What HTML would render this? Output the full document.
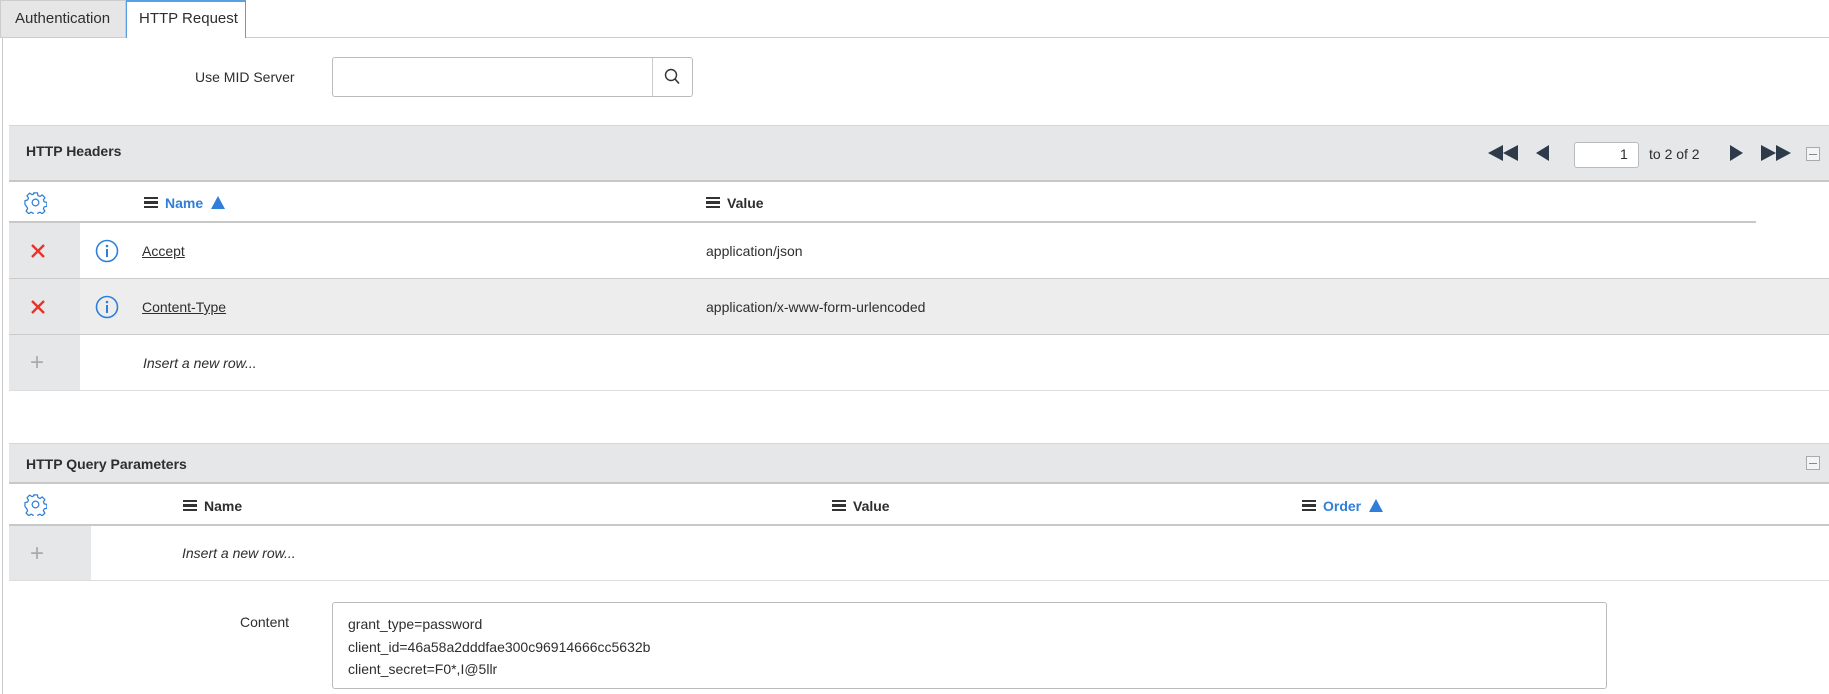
<!DOCTYPE html>
<html><head><meta charset="utf-8"><style>
*{box-sizing:border-box;margin:0;padding:0}
body{width:1829px;height:694px;background:#fff;font-family:"Liberation Sans",sans-serif;font-size:14px;color:#2e2e2e;position:relative;overflow:hidden}
.a{position:absolute}
.t{position:absolute;white-space:nowrap;line-height:18px}
.hb{position:absolute;width:14px;height:11px;border-top:2.5px solid #333;border-bottom:2.5px solid #333}
.hb:after{content:"";position:absolute;left:0;right:0;top:2px;height:2.5px;background:#333}
.blue{color:#2f7fd8}
</style></head><body>
<div class="a" style="left:0;top:0;width:126px;height:37px;background:#e6e6e6;border:1px solid #ccc;border-bottom:none"></div>
<div class="t" style="left:15px;top:10px;font-size:15px">Authentication</div>
<div class="a" style="left:126px;top:0;width:120px;height:38px;background:#fff;border:1px solid #5b9fe2;border-bottom:none;border-top:2px solid #5b9fe2"></div>
<div class="t" style="left:139px;top:10px;font-size:15px">HTTP Request</div>
<div class="a" style="left:246px;top:37px;width:1583px;height:1px;background:#ccc"></div>
<div class="a" style="left:0;top:37px;width:126px;height:1px;background:#ccc"></div>
<div class="a" style="left:2px;top:37px;width:1px;height:657px;background:#ccc"></div>

<div class="t" style="left:195px;top:68px">Use MID Server</div>
<div class="a" style="left:332px;top:57px;width:361px;height:40px;border:1px solid #bbb;border-radius:3px"></div>
<div class="a" style="left:652px;top:58px;width:1px;height:38px;background:#ccc"></div>
<svg class="a" style="left:663px;top:67px" width="20" height="20" viewBox="0 0 20 20"><circle cx="8" cy="8" r="5.5" fill="none" stroke="#333" stroke-width="1.4"/><line x1="12" y1="12" x2="16" y2="16.5" stroke="#333" stroke-width="1.6"/></svg>

<div class="a" style="left:9px;top:125px;width:1820px;height:57px;background:#e6e7e9;border-top:1px solid #d6d6d6;border-bottom:2px solid #c8c8c8"></div>
<div class="t" style="left:26px;top:142px;font-weight:bold">HTTP Headers</div>
<svg class="a" style="left:1488px;top:145px" width="32" height="16"><polygon points="15,0 15,16 0,8" fill="#2d3a4a"/><polygon points="30,0 30,16 15,8" fill="#2d3a4a"/></svg>
<svg class="a" style="left:1536px;top:145px" width="14" height="16"><polygon points="13,0 13,16 0,8" fill="#2d3a4a"/></svg>
<div class="a" style="left:1574px;top:142px;width:65px;height:26px;background:#fff;border:1px solid #bbb;border-radius:3px"></div>
<div class="t" style="left:1620px;top:145px">1</div>
<div class="t" style="left:1649px;top:145px">to 2 of 2</div>
<svg class="a" style="left:1730px;top:145px" width="14" height="16"><polygon points="0,0 0,16 13,8" fill="#2d3a4a"/></svg>
<svg class="a" style="left:1761px;top:145px" width="32" height="16"><polygon points="0,0 0,16 15,8" fill="#2d3a4a"/><polygon points="15,0 15,16 30,8" fill="#2d3a4a"/></svg>
<div class="a" style="left:1806px;top:147px;width:14px;height:14px;border:1px solid #aaa;background:#f4f4f4"></div>
<div class="a" style="left:1809px;top:154px;width:8px;height:1px;background:#888"></div>

<svg class="a" style="left:24px;top:191px" width="23" height="23" viewBox="0 0 24 24"><path d="M12 8.5a3.5 3.5 0 1 0 0 7a3.5 3.5 0 1 0 0-7z M10 2h4l.6 2.8 2 .9 2.4-1.6 2.8 2.8-1.6 2.4.9 2 2.8.6v4l-2.8.6-.9 2 1.6 2.4-2.8 2.8-2.4-1.6-2 .9-.6 2.8h-4l-.6-2.8-2-.9-2.4 1.6-2.8-2.8 1.6-2.4-.9-2L1 14v-4l2.8-.6.9-2L3.1 5 5.9 2.2 8.3 3.8l2-.9z" fill="none" stroke="#2f7fd8" stroke-width="1.3" stroke-linejoin="round"/></svg>
<div class="hb" style="left:144px;top:197px"></div>
<div class="t blue" style="left:165px;top:194px;font-weight:bold">Name</div>
<svg class="a" style="left:211px;top:196px" width="14" height="13"><polygon points="7,0 14,13 0,13" fill="#2f7fd8"/></svg>
<div class="hb" style="left:706px;top:197px"></div>
<div class="t" style="left:727px;top:194px;font-weight:bold">Value</div>
<div class="a" style="left:9px;top:221px;width:1747px;height:2px;background:#c8c8c8"></div>

<div class="a" style="left:9px;top:223px;width:1820px;height:55px;background:#fff"></div>
<div class="a" style="left:9px;top:278px;width:1820px;height:1px;background:#ccc"></div>
<div class="a" style="left:9px;top:279px;width:1820px;height:55px;background:#ededed"></div>
<div class="a" style="left:9px;top:334px;width:1820px;height:1px;background:#ccc"></div>
<div class="a" style="left:9px;top:390px;width:1820px;height:1px;background:#ddd"></div>
<div class="a" style="left:9px;top:223px;width:71px;height:167px;background:#e6e7e9"></div>
<div class="a" style="left:9px;top:278px;width:71px;height:1px;background:#ccc"></div>
<div class="a" style="left:9px;top:334px;width:71px;height:1px;background:#ccc"></div>
<svg class="a" style="left:30px;top:243px" width="16" height="16"><path d="M2 2L14 14M14 2L2 14" stroke="#e8332a" stroke-width="2.4"/></svg>
<svg class="a" style="left:30px;top:299px" width="16" height="16"><path d="M2 2L14 14M14 2L2 14" stroke="#e8332a" stroke-width="2.4"/></svg>
<svg class="a" style="left:95px;top:239px" width="24" height="24"><circle cx="12" cy="12" r="10.5" fill="none" stroke="#2f7fd8" stroke-width="1.6"/><circle cx="12" cy="7" r="1.3" fill="#2f7fd8"/><rect x="11" y="10" width="2" height="8" fill="#2f7fd8"/></svg>
<svg class="a" style="left:95px;top:295px" width="24" height="24"><circle cx="12" cy="12" r="10.5" fill="none" stroke="#2f7fd8" stroke-width="1.6"/><circle cx="12" cy="7" r="1.3" fill="#2f7fd8"/><rect x="11" y="10" width="2" height="8" fill="#2f7fd8"/></svg>
<div class="t" style="left:142px;top:242px;text-decoration:underline">Accept</div>
<div class="t" style="left:706px;top:242px">application/json</div>
<div class="t" style="left:142px;top:298px;text-decoration:underline">Content-Type</div>
<div class="t" style="left:706px;top:298px">application/x-www-form-urlencoded</div>
<div class="t" style="left:30px;top:354px;font-size:24px;color:#aaa;font-weight:300">+</div>
<div class="t" style="left:143px;top:354px;font-style:italic">Insert a new row...</div>

<div class="a" style="left:9px;top:443px;width:1820px;height:41px;background:#e6e7e9;border-top:1px solid #d6d6d6;border-bottom:2px solid #c8c8c8"></div>
<div class="t" style="left:26px;top:455px;font-weight:bold">HTTP Query Parameters</div>
<div class="a" style="left:1806px;top:456px;width:14px;height:14px;border:1px solid #aaa;background:#f4f4f4"></div>
<div class="a" style="left:1809px;top:463px;width:8px;height:1px;background:#888"></div>
<svg class="a" style="left:24px;top:493px" width="23" height="23" viewBox="0 0 24 24"><path d="M12 8.5a3.5 3.5 0 1 0 0 7a3.5 3.5 0 1 0 0-7z M10 2h4l.6 2.8 2 .9 2.4-1.6 2.8 2.8-1.6 2.4.9 2 2.8.6v4l-2.8.6-.9 2 1.6 2.4-2.8 2.8-2.4-1.6-2 .9-.6 2.8h-4l-.6-2.8-2-.9-2.4 1.6-2.8-2.8 1.6-2.4-.9-2L1 14v-4l2.8-.6.9-2L3.1 5 5.9 2.2 8.3 3.8l2-.9z" fill="none" stroke="#2f7fd8" stroke-width="1.3" stroke-linejoin="round"/></svg>
<div class="hb" style="left:183px;top:500px"></div>
<div class="t" style="left:204px;top:497px;font-weight:bold">Name</div>
<div class="hb" style="left:832px;top:500px"></div>
<div class="t" style="left:853px;top:497px;font-weight:bold">Value</div>
<div class="hb" style="left:1302px;top:500px"></div>
<div class="t blue" style="left:1323px;top:497px;font-weight:bold">Order</div>
<svg class="a" style="left:1369px;top:499px" width="14" height="13"><polygon points="7,0 14,13 0,13" fill="#2f7fd8"/></svg>
<div class="a" style="left:9px;top:524px;width:1820px;height:2px;background:#c8c8c8"></div>
<div class="a" style="left:9px;top:526px;width:82px;height:54px;background:#e6e7e9"></div>
<div class="a" style="left:9px;top:580px;width:1820px;height:1px;background:#ddd"></div>
<div class="t" style="left:30px;top:545px;font-size:24px;color:#aaa;font-weight:300">+</div>
<div class="t" style="left:182px;top:544px;font-style:italic">Insert a new row...</div>

<div class="t" style="left:240px;top:613px">Content</div>
<div class="a" style="left:332px;top:602px;width:1275px;height:87px;border:1px solid #bbb;border-radius:3px"></div>
<div class="t" style="left:348px;top:613px;line-height:22.5px">grant_type=password<br>client_id=46a58a2dddfae300c96914666cc5632b<br>client_secret=F0*,I@5llr</div>
</body></html>
